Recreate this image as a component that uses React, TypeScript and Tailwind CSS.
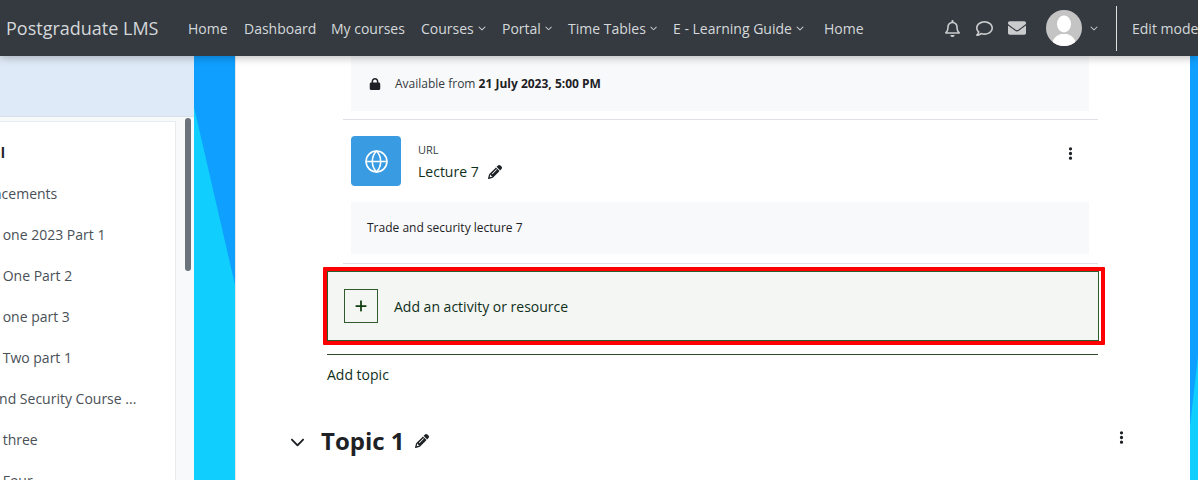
import { Globe } from "lucide-react";
import { FaBell, FaRegBell, FaRegComment, FaEnvelope } from "react-icons/fa";
import { FaChevronDown, FaEllipsisVertical, FaLock, FaPencil, FaPlus } from "react-icons/fa6";

const navItems = [
  { label: "Home", width: "w-[40px]" },
  { label: "Dashboard", width: "w-[71px]" },
  { label: "My courses", width: "w-[74px]" },
  { label: "Courses", width: "w-[65px]", caret: true },
  { label: "Portal", width: "w-[50px]", caret: true },
  { label: "Time Tables", width: "w-[89px]", caret: true },
  { label: "E - Learning Guide", width: "w-[135px]", caret: true },
  { label: "Home", width: "w-[40px]" },
];

const courseItems = [
  "General",
  "Announcements",
  "Lecture one 2023 Part 1",
  "Lecture One Part 2",
  "Lecture one part 3",
  "Lecture Two part 1",
  "Trade and Security Course ...",
  "Lecture three",
  "Lecture Four",
];

function NavBar() {
  return (
    <header className="relative z-10 flex h-[56px] shrink-0 items-center overflow-hidden bg-[#343a40] pl-[6px] text-[#d5d8db] shadow-[0_2px_8px_rgba(0,0,0,0.25)]">
      <span className="w-[182px] shrink-0 text-[18px]">Postgraduate LMS</span>
      <nav className="flex shrink-0 gap-[16px] text-[14px]">
        {navItems.map((item, i) => (
          <a key={i} className={`flex shrink-0 items-center gap-[4px] whitespace-nowrap ${item.width}`}>
            {item.label}
            {item.caret && <FaChevronDown className="size-[8px]" />}
          </a>
        ))}
      </nav>
      <div className="ml-[80px] flex shrink-0 items-center text-[#c9cbcd]">
        <FaRegBell className="size-[17px]" />
        <FaRegComment className="ml-[15px] size-[17px]" />
        <FaEnvelope className="ml-[15px] size-[18px]" />
        <div className="ml-[20px] flex size-[36px] items-end justify-center overflow-hidden rounded-full bg-[#c4c4c4]">
          <svg viewBox="0 0 36 36" className="size-[36px]" fill="#fff">
            <ellipse cx="18" cy="14" rx="7" ry="8.5" />
            <path d="M6 36c0-8 5-11 9-12h6c4 1 9 4 9 12z" />
          </svg>
        </div>
        <FaChevronDown className="ml-[8px] size-[8px]" />
        <div className="ml-[18px] h-[45px] w-px bg-[#dfe1e3]" />
      </div>
      <span className="ml-[15px] shrink-0 whitespace-nowrap text-[14px]">Edit mode</span>
    </header>
  );
}

function CourseIndex() {
  return (
    <aside className="flex w-[194px] shrink-0 flex-col overflow-hidden bg-[#f8f9fa]">
      <div className="h-[61px] shrink-0 border-b border-[#d8dfe7] bg-[#dfeaf8]" />
      <div className="flex min-h-0 flex-1">
        <ul className="mt-[4px] w-[176px] shrink-0 overflow-hidden border-r border-t border-[#e9ecef] bg-white pt-[10px] text-[14px] text-[#495057]">
          {courseItems.map((name, i) => (
            <li key={name} className={`-ml-[50px] flex h-[41px] items-center whitespace-nowrap ${i === 0 ? "font-bold text-[#1d2125]" : ""}`}>
              {name}
            </li>
          ))}
        </ul>
        <div className="ml-[9px] mt-[1px] h-[153px] w-[6px] rounded-full bg-[#6a737b]" />
      </div>
    </aside>
  );
}

function BlueStrip({ width, points }: { width: string; points: string }) {
  return (
    <svg viewBox="0 0 100 424" preserveAspectRatio="none" className={`h-full shrink-0 bg-[#0f9fff] ${width}`}>
      <polygon points={points} fill="#10cfff" />
    </svg>
  );
}

function ActivityPanel() {
  return (
    <main className="min-w-0 flex-1 overflow-hidden border-l border-[#e4e7ea] bg-white">
      <div className="ml-[107px] w-[755px]">
        <div className="ml-[8px] flex h-[55px] w-[738px] items-center bg-[#f8f9fa] pl-[18px] text-[12px] text-[#343a40]">
          <FaLock className="size-[12px] text-[#1d2125]" />
          <span className="ml-[14px]">
            Available from <b className="text-[#1d2125]">21 July 2023, 5:00 PM</b>
          </span>
        </div>
        <div className="mt-[8px] border-t border-[#dee2e6] pt-[16px]">
          <div className="relative ml-[8px] flex h-[50px] w-[738px]">
            <div className="flex size-[50px] items-center justify-center rounded-[4px] bg-[#399be2]">
              <Globe className="size-[25px] text-white" strokeWidth={1.5} />
            </div>
            <div className="ml-[17px] pt-[7px]">
              <div className="text-[11px] leading-[14px] text-[#343a40]">URL</div>
              <div className="mt-[5px] flex items-center text-[14px] leading-[20px] text-[#0f2f1a]">
                Lecture 7
                <FaPencil className="ml-[9px] size-[14px] text-[#1d2125]" />
              </div>
            </div>
            <FaEllipsisVertical className="absolute right-[11px] top-[10px] size-[15px] text-[#1d2125]" />
          </div>
          <div className="ml-[8px] mt-[16px] flex h-[52px] w-[738px] items-center bg-[#f8f9fa] pl-[16px] text-[12px] text-[#1d2125]">
            Trade and security lecture 7
          </div>
        </div>
        <div className="mt-[9px] h-px bg-[#dee2e6]" />
      </div>
      <div className="ml-[87px] mt-[3px] w-[782px] rounded-[1px] border-[4px] border-[#ff0000] bg-white p-[0]">
        <div className="flex h-[70px] w-[772px] items-center border border-[#2f5a2b] bg-[#f4f6f3] pl-[16px] text-[14px] text-[#0f2f1a]">
          <div className="flex size-[34px] items-center justify-center border border-[#2f5a2b]">
            <FaPlus className="size-[14px] text-[#0f3d0f]" />
          </div>
          <span className="ml-[16px]">Add an activity or resource</span>
        </div>
      </div>
      <div className="ml-[91px] mt-[9px] w-[771px] border-t border-[#2f4f2b] pt-[10px] text-[14px] leading-[20px] text-[#0f2f1a]">
        Add topic
      </div>
      <div className="relative ml-[54px] mt-[41px] flex w-[848px] items-center text-[#1d2125]">
        <FaChevronDown className="size-[15px]" />
        <h2 className="ml-[16px] text-[24px] leading-[30px] font-bold">Topic 1</h2>
        <FaPencil className="ml-[10px] size-[14px]" />
        <FaEllipsisVertical className="absolute right-[9px] top-[4px] size-[15px]" />
      </div>
    </main>
  );
}

export default function App() {
  return (
    <div className="flex h-[480px] w-[1198px] flex-col overflow-hidden font-['Open_Sans',sans-serif]">
      <NavBar />
      <div className="flex min-h-0 flex-1">
        <CourseIndex />
        <BlueStrip width="w-[41px]" points="0,51 100,229 100,424 0,424" />
        <ActivityPanel />
        <BlueStrip width="w-[8px]" points="0,424 0,370 100,300 100,424" />
      </div>
    </div>
  );
}
